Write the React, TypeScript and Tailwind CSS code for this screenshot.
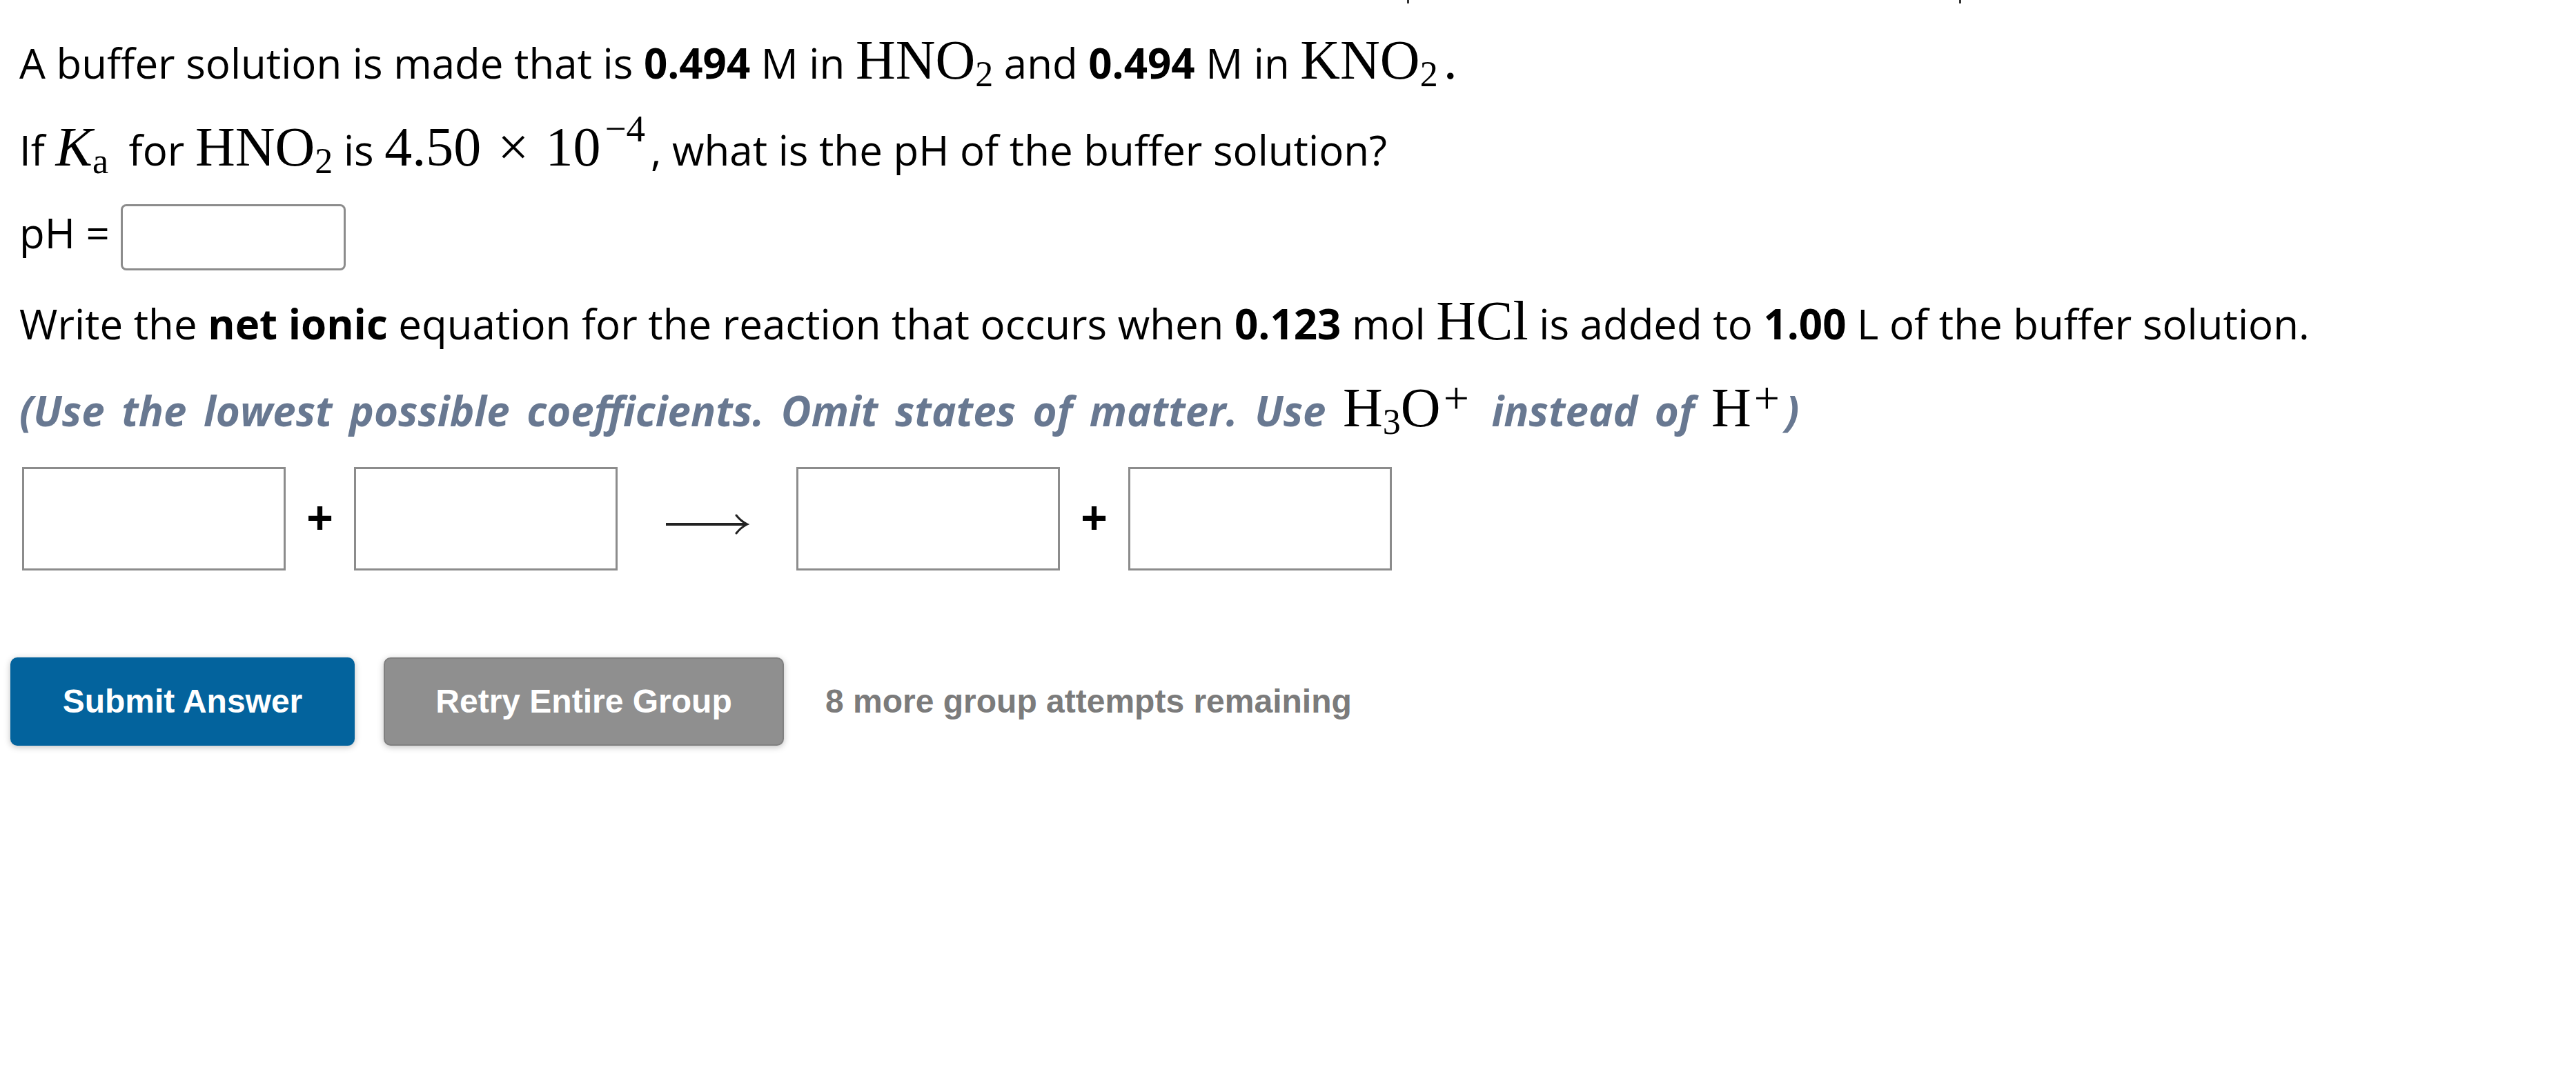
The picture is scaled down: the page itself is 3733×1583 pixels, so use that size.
import React from "react";

// serif math run, roughly the size a MathJax block takes next to 60px body text
function Chem({ children, className = "" }: { children: React.ReactNode; className?: string }) {
  return (
    <span className={"font-['Liberation_Serif',serif] text-[80px] font-normal not-italic leading-[0.9] text-black " + className}>
      {children}
    </span>
  );
}

function Sub({ children }: { children: React.ReactNode }) {
  return <span className="text-[52px] leading-[0] align-[-11px]">{children}</span>;
}

function Sup({ children }: { children: React.ReactNode }) {
  return <span className="ml-[6px] text-[55px] leading-[0] align-[35px]">{children}</span>;
}

// ionic charge, drawn larger like the TeX plus
function Charge() {
  return <span className="ml-[4px] text-[66px] leading-[0] align-[19px]">+</span>;
}

function AnswerBox() {
  return (
    <input
      type="text"
      aria-label="answer"
      className="h-[150px] w-[382px] shrink-0 border-[3px] border-[#8c8c8c] bg-white px-4 text-[60px] outline-none"
    />
  );
}

function Plus() {
  return (
    <span className="flex w-[99px] shrink-0 justify-center pb-[4px] font-['Liberation_Sans',sans-serif] text-[66px] font-bold leading-none">
      +
    </span>
  );
}

function Arrow() {
  return (
    <span className="flex w-[259px] shrink-0 justify-center pt-[16px]">
      <svg width="122" height="32" viewBox="0 0 122 32" fill="none">
        <path d="M1 16 H118" stroke="#222" strokeWidth="4" />
        <path d="M103 3 Q110 12 119 16 Q110 20 103 29" stroke="#222" strokeWidth="3" strokeLinecap="round" />
      </svg>
    </span>
  );
}

export default function App() {
  return (
    <div className="min-h-[1583px] w-full bg-white text-black font-['Open_Sans',sans-serif]">
      {/* tails of the line above, clipped at the top edge */}
      <div className="flex h-[5px]">
        <span className="ml-[2039px] w-[3px] bg-[#333]" />
        <span className="ml-[797px] w-[3px] bg-[#333]" />
      </div>

      <div className="pl-[15px] pt-[44px]">
        <p className="h-[84px] whitespace-nowrap pl-[13px] text-[60px] leading-[84px]">
          A buffer solution is made that is <b>0.494</b> M in{" "}
          <Chem>
            HNO<Sub>2</Sub>
          </Chem>{" "}
          and <b>0.494</b> M in{" "}
          <Chem>
            KNO<Sub>2</Sub>
            <span className="ml-[8px]">.</span>
          </Chem>
        </p>

        <p className="mt-[42px] h-[84px] whitespace-nowrap pl-[13px] text-[60px] leading-[84px]">
          If{" "}
          <Chem className="mr-[14px]">
            <i>K</i>
            <Sub>a</Sub>
          </Chem>{" "}
          for{" "}
          <Chem>
            HNO<Sub>2</Sub>
          </Chem>{" "}
          is{" "}
          <Chem className="mr-[8px]">
            4.50<span className="mx-[24px]">×</span>10
            <Sup>−4</Sup>
          </Chem>
          , what is the pH of the buffer solution?
        </p>

        <div className="mt-[36px] flex h-[97px] items-start pl-[13px]">
          <span className="text-[60px] leading-[84px]">pH =</span>
          <input
            type="text"
            aria-label="pH"
            className="ml-[16px] mt-[1px] h-[96px] w-[326px] rounded-[8px] border-[3px] border-[#8c8c8c] bg-white px-4 text-[60px] outline-none"
          />
        </div>

        <p className="mt-[35px] h-[84px] whitespace-nowrap pl-[13px] text-[60px] leading-[84px]">
          Write the <b>net ionic</b> equation for the reaction that occurs when <b>0.123</b> mol{" "}
          <Chem>HCl</Chem> is added to <b>1.00</b> L of the buffer solution.
        </p>

        <p className="mt-[42px] h-[84px] whitespace-nowrap pl-[13px] text-[60px] font-bold italic leading-[84px] text-[#687891] [word-spacing:9px]">
          (Use the lowest possible coefficients. Omit states of matter. Use{" "}
          <Chem className="mr-[8px]">
            H<Sub>3</Sub>O<Charge />
          </Chem>{" "}
          instead of{" "}
          <Chem className="mr-[8px]">
            H<Charge />
          </Chem>
          )
        </p>

        <div className="mt-[40px] flex items-center pl-[17px]">
          <AnswerBox />
          <Plus />
          <AnswerBox />
          <Arrow />
          <AnswerBox />
          <Plus />
          <AnswerBox />
        </div>

        <div className="mt-[126px] flex items-center font-['Liberation_Sans',sans-serif] text-[48px] font-bold">
          <button
            type="button"
            className="h-[128px] w-[499px] rounded-[10px] bg-[#03639d] text-white shadow-[0_2px_10px_rgba(0,0,0,0.25)]"
          >
            Submit Answer
          </button>
          <button
            type="button"
            className="ml-[42px] h-[128px] w-[580px] rounded-[10px] border-2 border-[#808080] bg-[#8f8f8f] text-white shadow-[0_2px_10px_rgba(0,0,0,0.25)]"
          >
            Retry Entire Group
          </button>
          <span className="ml-[60px] text-[#7b7b7b]">8 more group attempts remaining</span>
        </div>
      </div>
    </div>
  );
}
